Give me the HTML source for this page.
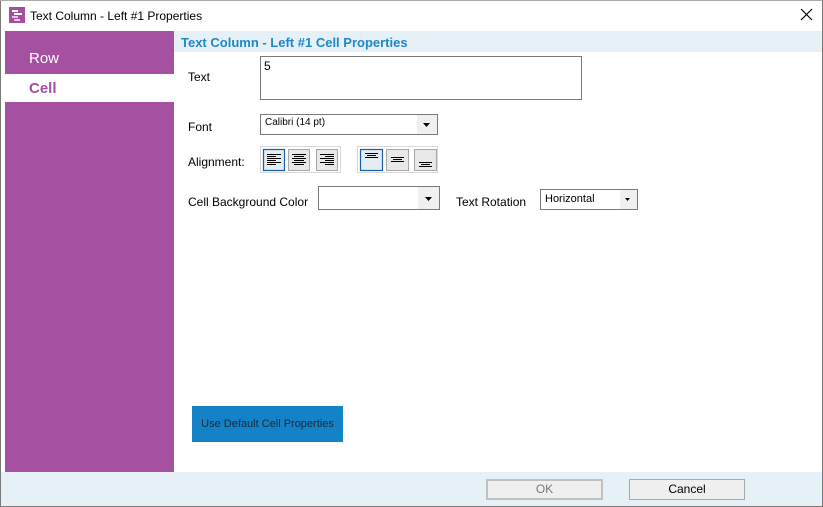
<!DOCTYPE html>
<html><head><meta charset="utf-8"><style>
*{margin:0;padding:0;box-sizing:border-box}
body{width:823px;height:507px;overflow:hidden;background:#fff;font-family:"Liberation Sans",sans-serif;font-size:12px;color:#000;position:relative}
.a{position:absolute}
.win{left:0;top:0;width:823px;height:507px;border:1px solid #7a7a7a;border-top:none}
.top{left:0;top:0;width:823px;height:1px;background:#aaa}
</style></head><body>
<div class="a win"></div>
<div class="a top"></div>
<svg class="a" style="left:8px;top:6px" width="18" height="18"><rect x="1" y="1" width="16" height="16" fill="#a64ea0"/><rect x="4" y="4" width="6" height="2" fill="#fff"/><rect x="6" y="7" width="8" height="2" fill="#fff"/><rect x="4" y="10" width="6" height="2" fill="#e8c8e6"/><rect x="6" y="13" width="6" height="2" fill="#e8c8e6"/></svg>
<div class="a" style="left:30px;top:9px;font-size:12px">Text Column - Left #1 Properties</div>
<svg class="a" style="left:800px;top:8px" width="13" height="13"><path d="M1 1L12 12M12 1L1 12" stroke="#000" stroke-width="1.2"/></svg>
<div class="a" style="left:5px;top:31px;width:169px;height:441px;background:#a650a2"></div>
<div class="a" style="left:5px;top:74px;width:169px;height:28px;background:#fff"></div>
<div class="a" style="left:29px;top:50px;font-size:15px;color:#fff">Row</div>
<div class="a" style="left:29px;top:80px;font-size:15px;color:#a650a2;font-weight:bold">Cell</div>
<div class="a" style="left:174px;top:31px;width:648px;height:21px;background:#e6f1f7"></div>
<div class="a" style="left:181px;top:35px;font-size:13px;font-weight:bold;color:#1e88c8">Text Column - Left #1 Cell Properties</div>
<div class="a" style="left:188px;top:70px">Text</div>
<div class="a" style="left:260px;top:56px;width:322px;height:44px;border:1px solid #7a7a7a;padding:2px 3px">5</div>
<div class="a" style="left:188px;top:120px">Font</div>
<div class="a" style="left:260px;top:114px;width:178px;height:21px;border:1px solid #7a7a7a;font-size:10px;padding:2px 4px">Calibri (14 pt)</div>
<div class="a" style="left:417px;top:115px;width:20px;height:19px;background:#f0f0f0"></div>
<svg class="a" style="left:423px;top:123px" width="8" height="5"><path d="M0 0H7L3.5 4Z" fill="#000"/></svg>
<div class="a" style="left:188px;top:155px">Alignment:</div>
<svg class="a" style="left:260px;top:146px" width="180" height="28">
<rect x="0.5" y="0.5" width="80" height="26" fill="#fff" stroke="#d8d8d8"/>
<rect x="97.5" y="0.5" width="80" height="26" fill="#fff" stroke="#d8d8d8"/>
<rect x="3.5" y="3.5" width="21" height="21" fill="#e4ecf4" stroke="#1a5fa8" stroke-width="1.2"/>
<rect x="28.5" y="3.5" width="21" height="21" fill="#e8e8e8" stroke="#a8a8a8"/>
<rect x="56.5" y="3.5" width="21" height="21" fill="#e8e8e8" stroke="#a8a8a8"/>
<rect x="100.5" y="3.5" width="22" height="21" fill="#e4ecf4" stroke="#1a5fa8" stroke-width="1.2"/>
<rect x="126.5" y="3.5" width="22" height="21" fill="#e8e8e8" stroke="#a8a8a8"/>
<rect x="154.5" y="3.5" width="22" height="21" fill="#e8e8e8" stroke="#a8a8a8"/>
<g stroke="#000" stroke-width="1">
<path d="M7 8.5H21M7 10.5H16M7 12.5H21M7 14.5H16M7 16.5H21M7 18.5H16"/>
<path d="M32 8.5H46M34 10.5H44M32 12.5H46M34 14.5H44M32 16.5H46M34 18.5H44"/>
<path d="M60 8.5H74M65 10.5H74M60 12.5H74M65 14.5H74M60 16.5H74M65 18.5H74"/>
<path d="M105 7.5H118M107 9.5H116M105 11.5H118"/>
<path d="M131 11.5H144M133 13.5H142M131 15.5H144"/>
<path d="M159 16.5H172M161 18.5H170M159 20.5H172"/>
</g></svg>
<div class="a" style="left:188px;top:195px">Cell Background Color</div>
<div class="a" style="left:318px;top:186px;width:122px;height:24px;border:1px solid #7a7a7a"></div>
<div class="a" style="left:418px;top:187px;width:21px;height:22px;background:#f0f0f0"></div>
<svg class="a" style="left:425px;top:197px" width="8" height="5"><path d="M0 0H7L3.5 4Z" fill="#000"/></svg>
<div class="a" style="left:456px;top:195px">Text Rotation</div>
<div class="a" style="left:540px;top:189px;width:98px;height:21px;border:1px solid #7a7a7a;font-size:11px;padding:3px 4px">Horizontal</div>
<div class="a" style="left:620px;top:190px;width:17px;height:19px;background:#f0f0f0"></div>
<svg class="a" style="left:625px;top:198px" width="6" height="4"><path d="M0 0H5L2.5 3Z" fill="#000"/></svg>
<div class="a" style="left:192px;top:406px;width:151px;height:36px;background:#1382c6;color:#1a2a3a;font-size:11px;line-height:36px;text-align:center">Use Default Cell Properties</div>
<div class="a" style="left:1px;top:472px;width:821px;height:34px;background:#e6f1f7"></div>
<div class="a" style="left:486px;top:479px;width:117px;height:21px;background:#efefef;border:2px solid #c0c0c0;color:#777;text-align:center;line-height:17px">OK</div>
<div class="a" style="left:629px;top:479px;width:116px;height:21px;background:#efefef;border:1px solid #a8a8a8;text-align:center;line-height:19px">Cancel</div>
</body></html>
